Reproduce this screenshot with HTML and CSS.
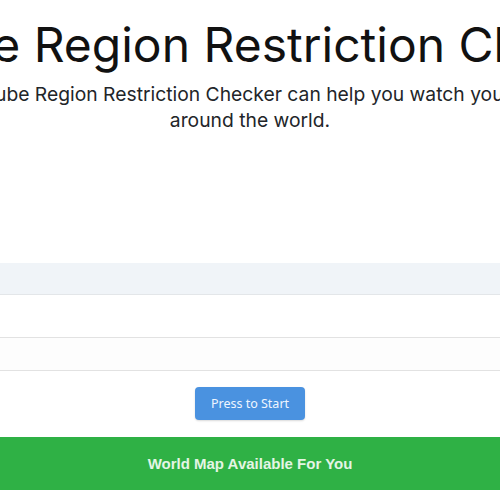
FILE: index.html
```html
<!DOCTYPE html>
<html lang="en">
<head>
<meta charset="utf-8">
<title>YouTube Region Restriction Checker</title>
<link rel="stylesheet" href="styles.css">
</head>
<body>
  <header class="hero">
    <h1 class="title">YouTube Region Restriction Checker</h1>
    <p class="lead">YouTube Region Restriction Checker can help you watch your film<br>around the world.</p>
  </header>

  <section class="results">
    <div class="results-head"></div>
    <div class="results-row row-tall"></div>
    <div class="results-row row-short"></div>
  </section>

  <div class="actions">
    <button class="start-btn" type="button">Press to Start</button>
  </div>

  <div class="map-banner">World Map Available For You</div>
</body>
</html>
```

FILE: styles.css
```css
html, body {
  margin: 0;
  padding: 0;
  background: #ffffff;
}

body {
  width: 500px;
  height: 500px;
  overflow: hidden;
  font-family: Inter, "Noto Sans", sans-serif;
}

.hero {
  display: flex;
  flex-direction: column;
  align-items: center;
  padding-top: 16px;
  height: 247px;
  box-sizing: border-box;
}

.title {
  margin: 0 28px 0 0;
  font-size: 48px;
  line-height: 1.2;
  font-weight: 400;
  color: #111111;
  white-space: nowrap;
}

.lead {
  margin: 7px 0 0;
  font-size: 19.3px;
  line-height: 26px;
  color: #222529;
  text-align: center;
  white-space: nowrap;
}

.results {
  margin-top: 16px;
}

.results-head {
  height: 31px;
  background: #f0f4f8;
  border-bottom: 1px solid #e3e6e9;
}

.results-row {
  border-bottom: 1px solid #e2e2e2;
}

.row-tall {
  height: 42px;
  background: #ffffff;
}

.row-short {
  height: 32px;
  background: #fdfdfd;
}

.actions {
  display: flex;
  justify-content: center;
  padding-top: 16px;
}

.start-btn {
  width: 110px;
  height: 33px;
  border: 0;
  border-radius: 4px;
  background: #4a92e0;
  color: #eef5ff;
  font-family: "Noto Sans", "Open Sans", sans-serif;
  font-size: 12.5px;
  box-shadow: 0 1px 2px rgba(0, 0, 0, 0.15);
  padding: 0;
}

.map-banner {
  margin-top: 17px;
  height: 53px;
  display: flex;
  align-items: center;
  justify-content: center;
  background: #2fb145;
  color: #e4f5e4;
  font-family: "Liberation Sans", Arial, sans-serif;
  font-size: 15px;
  font-weight: 700;
}
```
